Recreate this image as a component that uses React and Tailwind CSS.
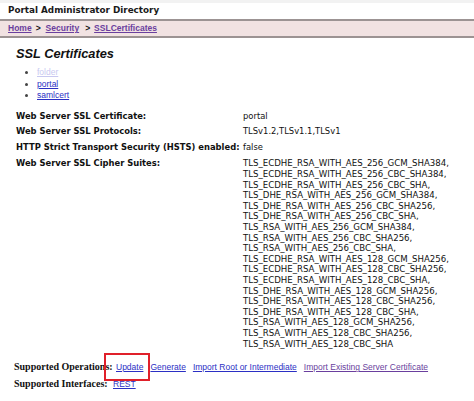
import React from "react";

const ciphers = [
  "TLS_ECDHE_RSA_WITH_AES_256_GCM_SHA384,",
  "TLS_ECDHE_RSA_WITH_AES_256_CBC_SHA384,",
  "TLS_ECDHE_RSA_WITH_AES_256_CBC_SHA,",
  "TLS_DHE_RSA_WITH_AES_256_GCM_SHA384,",
  "TLS_DHE_RSA_WITH_AES_256_CBC_SHA256,",
  "TLS_DHE_RSA_WITH_AES_256_CBC_SHA,",
  "TLS_RSA_WITH_AES_256_GCM_SHA384,",
  "TLS_RSA_WITH_AES_256_CBC_SHA256,",
  "TLS_RSA_WITH_AES_256_CBC_SHA,",
  "TLS_ECDHE_RSA_WITH_AES_128_GCM_SHA256,",
  "TLS_ECDHE_RSA_WITH_AES_128_CBC_SHA256,",
  "TLS_ECDHE_RSA_WITH_AES_128_CBC_SHA,",
  "TLS_DHE_RSA_WITH_AES_128_GCM_SHA256,",
  "TLS_DHE_RSA_WITH_AES_128_CBC_SHA256,",
  "TLS_DHE_RSA_WITH_AES_128_CBC_SHA,",
  "TLS_RSA_WITH_AES_128_GCM_SHA256,",
  "TLS_RSA_WITH_AES_128_CBC_SHA256,",
  "TLS_RSA_WITH_AES_128_CBC_SHA",
];

const blue = "text-[#2b2fc4] underline";
const purple = "text-[#6a3f9e] underline";

export default function App() {
  return (
    <div className="relative w-[474px] h-[401px] overflow-hidden bg-white text-[#111] font-['DejaVu_Sans',sans-serif]">
      {/* header */}
      <div className="h-[3px] bg-[#f2f2f2]" />
      <div className="h-[16px] pl-[8px] flex items-center text-[8.8px] font-bold text-[#1a1a1a]">
        Portal Administrator Directory
      </div>
      <div className="h-[2px] bg-[#9c9393]" />
      <div className="h-[15px] pl-[8px] flex items-center bg-[#f1e2e2] text-[8.5px] font-bold whitespace-nowrap font-['Liberation_Sans',sans-serif]">
        <a className={purple}>Home</a>
        <span className="ml-[4px] mr-[5px]">&gt;</span>
        <a className={purple}>Security</a>
        <span className="ml-[6px] mr-[4px]">&gt;</span>
        <a className={purple}>SSLCertificates</a>
      </div>
      <div className="h-[2px] bg-[#9c9393]" />

      {/* title */}
      <h1 className="mt-[7px] pl-[16px] text-[12.8px] font-bold italic leading-[18px] font-['Liberation_Sans',sans-serif]">
        SSL Certificates
      </h1>

      <ul className="mt-[4px] pl-[37px] list-disc marker:text-[#444] text-[8.5px] leading-[11.5px] font-['Liberation_Sans',sans-serif]">
        <li className="text-[#c8c8f0]">
          <a className="text-[#c8c8f0] underline">folder</a>
        </li>
        <li>
          <a className={blue}>portal</a>
        </li>
        <li>
          <a className={blue}>samlcert</a>
        </li>
      </ul>

      {/* properties */}
      <div className="mt-[9px] pl-[16px] grid grid-cols-[227px_1fr] text-[8.4px] leading-[10.6px] gap-y-[5.4px] whitespace-nowrap">
        <div className="font-bold">Web Server SSL Certificate:</div>
        <div>portal</div>
        <div className="font-bold">Web Server SSL Protocols:</div>
        <div>TLSv1.2,TLSv1.1,TLSv1</div>
        <div className="font-bold">HTTP Strict Transport Security (HSTS) enabled:</div>
        <div>false</div>
        <div className="font-bold">Web Server SSL Cipher Suites:</div>
        <div className="flex flex-col text-[8.6px]">
          {ciphers.map((c) => (
            <span key={c}>{c}</span>
          ))}
        </div>
      </div>

      {/* operations */}
      <div className="mt-[12px] pl-[14px] flex flex-col gap-[5px] text-[8.5px] leading-[12px] whitespace-nowrap">
        <div className="flex items-baseline">
          <span className="w-[102px] font-bold font-['Liberation_Serif',serif] text-[10px]">
            Supported Operations:
          </span>
          <div className="flex gap-[7px] font-['Liberation_Sans',sans-serif]">
            <a className={blue}>Update</a>
            <a className={blue}>Generate</a>
            <a className={blue}>Import Root or Intermediate</a>
            <a className={purple}>Import Existing Server Certificate</a>
          </div>
        </div>
        <div className="flex items-baseline">
          <span className="w-[99px] font-bold font-['Liberation_Serif',serif] text-[10px]">
            Supported Interfaces:
          </span>
          <a className={`${blue} font-['Liberation_Sans',sans-serif]`}>REST</a>
        </div>
      </div>

      {/* annotation */}
      <div className="absolute left-[104px] top-[353px] w-[46px] h-[28px] border-2 border-[#e0202a]" />
    </div>
  );
}
